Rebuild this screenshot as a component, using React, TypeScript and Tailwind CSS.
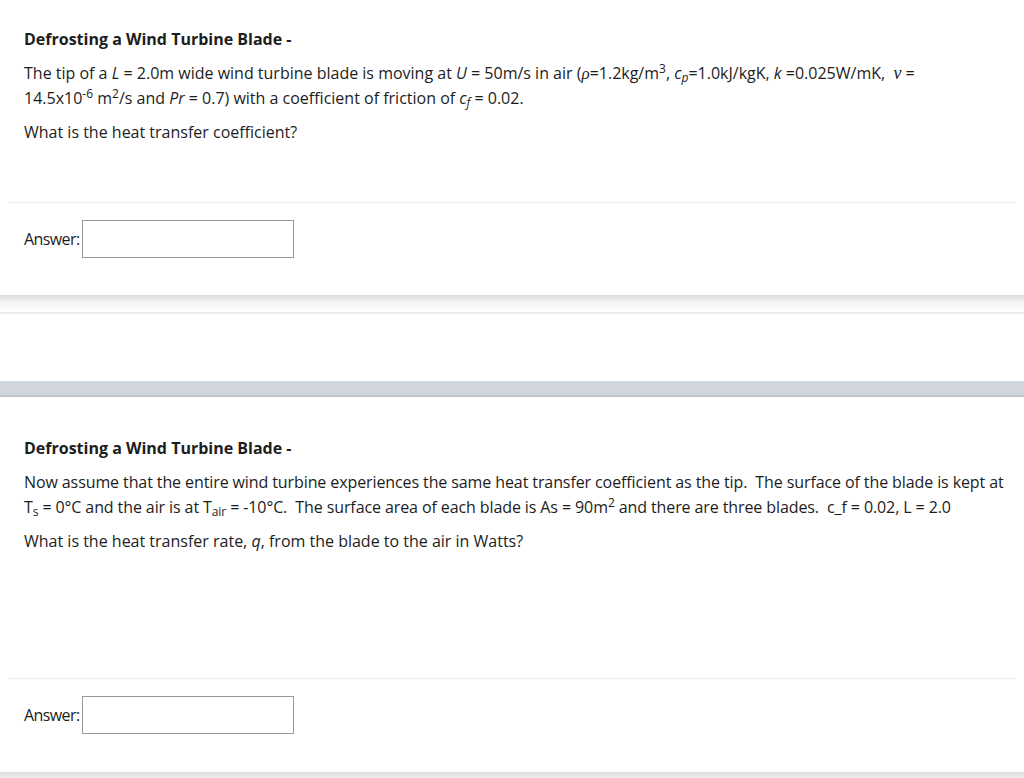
import React from 'react';

function AnswerRow() {
  return (
    <div className="flex items-center px-6 pt-[17px]">
      <span className="pr-[3px] tracking-[-0.6px]">Answer:</span>
      <input
        type="text"
        className="h-[38px] w-[212px] border border-[#999] bg-white px-2 outline-none"
      />
    </div>
  );
}

function Shadow() {
  return <div className="h-[17px] bg-gradient-to-b from-[#dcdcdc] via-[#f6f6f6] to-white" />;
}

export default function App() {
  return (
    <div
      className="min-h-[778px] w-[1024px] bg-white text-[16px] leading-[25px] text-[#1d1d1d] [&_sub]:leading-none [&_sup]:leading-none"
      style={{ fontFamily: '"Open Sans", "Noto Sans", sans-serif' }}
    >
      {/* first question */}
      <section className="h-[295px]">
        <div className="px-6 pt-[27px]">
          <h3 className="font-bold">Defrosting a Wind Turbine Blade -</h3>
          <p className="mt-[9px] whitespace-nowrap">
            The tip of a <i>L</i> = 2.0m wide wind turbine blade is moving at <i>U</i> = 50m/s in air (
            <i className="font-['Liberation_Serif'] text-[17px]">ρ</i>=1.2kg/m<sup>3</sup>, <i>c</i>
            <sub><i>p</i></sub>=1.0kJ/kgK, <i>k</i> =0.025W/mK,&nbsp;&nbsp;
            <i className="font-['Liberation_Serif'] text-[18px]">ν</i> =
            <br />
            14.5x10<sup>-6</sup> m<sup>2</sup>/s and <i>Pr</i> = 0.7) with a coefficient of friction of <i>c</i>
            <sub><i>f</i></sub> = 0.02.
          </p>
          <p className="mt-[9px]">What is the heat transfer coefficient?</p>
        </div>
        <div className="mx-2 mt-[57px] border-t border-[#ececec]" />
        <AnswerRow />
      </section>
      <Shadow />
      <div className="h-[69px] border-t-2 border-[#ececec]" />
      <div className="h-[16px] border-b-2 border-[#bfc3ca] bg-[#d1d5dc]" />

      {/* second question */}
      <section className="h-[375px]">
        <div className="px-6 pt-[39px]">
          <h3 className="font-bold">Defrosting a Wind Turbine Blade -</h3>
          <p className="mt-[9px] whitespace-nowrap tracking-[-0.1px]">
            Now assume that the entire wind turbine experiences the same heat transfer coefficient as the tip.&nbsp; The
            surface of the blade is kept at
            <br />
            T<sub>s</sub> = 0°C and the air is at T<sub>air</sub> = -10°C.&nbsp; The surface area of each blade is As =
            90m<sup>2</sup> and there are three blades.&nbsp; c_f = 0.02, L = 2.0
          </p>
          <p className="mt-[9px]">
            What is the heat transfer rate, <i>q</i>, from the blade to the air in Watts?
          </p>
        </div>
        <div className="mx-2 mt-[124px] border-t border-[#ececec]" />
        <AnswerRow />
      </section>
      <Shadow />
    </div>
  );
}
